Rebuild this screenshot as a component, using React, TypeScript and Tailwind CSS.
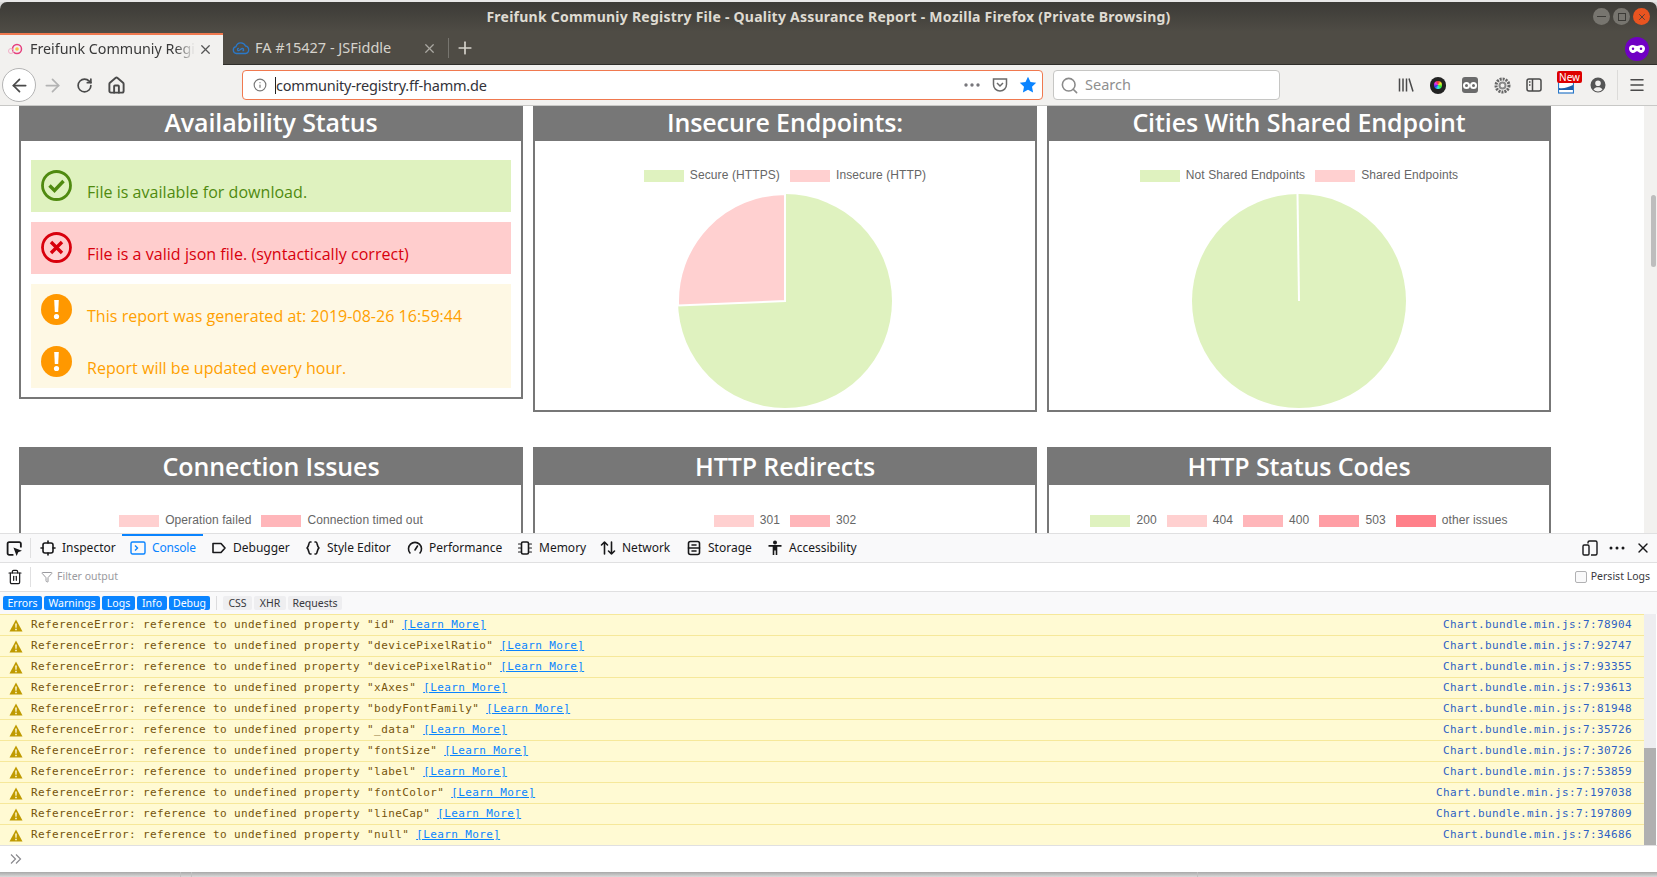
import type { ReactNode } from "react";
import { ArrowLeft, ArrowRight, RotateCw, Home, Info, Search, X, Plus, Menu, Trash2, Funnel } from "lucide-react";

const GREEN = "bg-[#dff2bf]";
const PINK = "bg-[#ffd0d0]";
const PINK2 = "bg-[#ffb6ba]";
const PINK3 = "bg-[#ff9ea5]";
const PINK4 = "bg-[#ff808a]";

const MESSAGES = [
  ["id", "78904"],
  ["devicePixelRatio", "92747"],
  ["devicePixelRatio", "93355"],
  ["xAxes", "93613"],
  ["bodyFontFamily", "81948"],
  ["_data", "35726"],
  ["fontSize", "30726"],
  ["label", "53859"],
  ["fontColor", "197038"],
  ["lineCap", "197809"],
  ["null", "34686"],
];

function DevIcon({ children }: { children: ReactNode }) {
  return (
    <svg width="16" height="16" viewBox="0 0 16 16" fill="none" stroke="#18181a" strokeWidth="1.6" strokeLinecap="round" strokeLinejoin="round" className="shrink-0">
      {children}
    </svg>
  );
}

const TABS: { name: string; w: string; icon: ReactNode; active?: boolean }[] = [
  {
    name: "Inspector",
    w: "w-[90px]",
    icon: (
      <DevIcon>
        <rect x="3" y="3" width="10" height="10" rx="2" />
        <path d="M8 1v2M8 13v2M1 8h2M13 8h2" />
      </DevIcon>
    ),
  },
  {
    name: "Console",
    w: "w-[81px]",
    active: true,
    icon: (
      <svg width="16" height="16" viewBox="0 0 16 16" fill="none" stroke="#0a84ff" strokeWidth="1.4" className="shrink-0">
        <rect x="1" y="2" width="14" height="12" rx="1.5" />
        <path d="M5 5.5 7.5 8 5 10.5" />
      </svg>
    ),
  },
  {
    name: "Debugger",
    w: "w-[94px]",
    icon: (
      <DevIcon>
        <path d="M2 3.5h8l4 4.5-4 4.5H2z" />
      </DevIcon>
    ),
  },
  {
    name: "Style Editor",
    w: "w-[102px]",
    icon: (
      <DevIcon>
        <path d="M6 2H5C3.5 2 4 7 2 8c2 1 1.500 6 3 6h1M10 2h1c1.500 0 1 5 3 6-2 1-1.500 6-3 6h-1" />
      </DevIcon>
    ),
  },
  {
    name: "Performance",
    w: "w-[110px]",
    icon: (
      <DevIcon>
        <path d="M3 13a6.500 6.500 0 1 1 10 0M8 10l2.500-4" />
      </DevIcon>
    ),
  },
  {
    name: "Memory",
    w: "w-[83px]",
    icon: (
      <DevIcon>
        <rect x="4.500" y="2" width="7" height="12" rx="1.500" />
        <path d="M1.500 4h2M1.500 8h2M1.500 12h2M12.500 4h2M12.500 8h2M12.500 12h2" strokeWidth="1.100" />
      </DevIcon>
    ),
  },
  {
    name: "Network",
    w: "w-[86px]",
    icon: (
      <DevIcon>
        <path d="M4.500 14V2M1.500 5l3-3 3 3M11.500 2v12M8.500 11l3 3 3-3" />
      </DevIcon>
    ),
  },
  {
    name: "Storage",
    w: "w-[81px]",
    icon: (
      <DevIcon>
        <rect x="2.500" y="1.500" width="11" height="13" rx="2" />
        <path d="M2.500 8h11M6 5h4M6 11h4" />
      </DevIcon>
    ),
  },
  {
    name: "Accessibility",
    w: "w-[106px]",
    icon: (
      <svg width="16" height="16" viewBox="0 0 16 16" fill="#18181a" className="shrink-0">
        <circle cx="8" cy="2.500" r="2" />
        <path d="M1.500 5h13v1.800H10.300V15H8.700v-4.500H7.300V15H5.700V6.800H1.500z" />
      </svg>
    ),
  },
];

const FILTERS_ON = [
  ["Errors", "w-[39px]"],
  ["Warnings", "w-[56px]"],
  ["Logs", "w-[33px]"],
  ["Info", "w-[30px]"],
  ["Debug", "w-[41px]"],
];

const FILTERS_OFF = [
  ["CSS", "w-[29px]"],
  ["XHR", "w-[32px]"],
  ["Requests", "w-[54px]"],
];

function WindowBtn({ bg, children }: { bg: string; children: ReactNode }) {
  return <div className={`w-[17px] h-[17px] rounded-full flex items-center justify-center ${bg}`}>{children}</div>;
}

function Slot({ children, w = "w-8" }: { children: ReactNode; w?: string }) {
  return <div className={`${w} h-full flex items-center justify-center shrink-0 relative`}>{children}</div>;
}

function StatusIcon({ kind }: { kind: "ok" | "bad" | "warn" }) {
  if (kind === "warn") {
    return (
      <svg width="31" height="31" viewBox="0 0 31 31" className="shrink-0">
        <circle cx="15.500" cy="15.500" r="15.500" fill="#ff9800" />
        <path d="M13.200 6h4.600l-.6 12h-3.400z" fill="#fff" />
        <circle cx="15.500" cy="22.500" r="2.600" fill="#fff" />
      </svg>
    );
  }
  const color = kind === "ok" ? "#4f8a10" : "#d8000c";
  return (
    <svg width="31" height="31" viewBox="0 0 31 31" fill="none" stroke={color} className="shrink-0">
      <circle cx="15.500" cy="15.500" r="14" strokeWidth="2.800" />
      {kind === "ok" ? (
        <path d="M8.500 15.500l5 5 9-9.500" strokeWidth="3.400" />
      ) : (
        <path d="M10 10l11 11M21 10 10 21" strokeWidth="3.400" />
      )}
    </svg>
  );
}

function Alert({ kind, text }: { kind: "ok" | "bad" | "warn"; text: string }) {
  const color = kind === "ok" ? "text-[#4f8a10]" : kind === "bad" ? "text-[#d8000c]" : "text-[#ffa000]";
  return (
    <div className="h-[52px] flex pl-[10px] pt-[10px] gap-[15px]">
      <StatusIcon kind={kind} />
      <div className={`pt-[10px] text-[16px] leading-[24px] tracking-[0.04px] ${color}`}>{text}</div>
    </div>
  );
}

function Card({ title, children }: { title: string; children: ReactNode }) {
  return (
    <div className="w-[504px] border-2 border-[#777777] bg-white self-start">
      <div className="h-[36px] bg-[#777777] text-white text-center text-[25px] leading-[34px] tracking-[-0.1px] font-semibold">
        {title}
      </div>
      {children}
    </div>
  );
}

function Legend({ items }: { items: [string, string][] }) {
  return (
    <div className="flex justify-center gap-[10px] h-[12px] font-['Liberation_Sans',sans-serif] text-[12px] leading-[12px] tracking-[0.1px] text-[#666666]">
      {items.map(([label, color]) => (
        <div key={label} className="flex gap-[6px]">
          <div className={`w-10 h-3 ${color}`} />
          <span className="-mt-px">{label}</span>
        </div>
      ))}
    </div>
  );
}

function Pie({ shared }: { shared?: boolean }) {
  return (
    <svg width="216" height="216" viewBox="0 0 216 216" className="block mx-auto mt-[11px]">
      <circle cx="108" cy="108" r="107" fill="#dff2bf" />
      {shared ? (
        <path d="M108 108 106.500 1" stroke="#fff" strokeWidth="2" fill="none" />
      ) : (
        <path d="M108 108V1A107 107 0 0 0 1.100 112.500Z" fill="#ffd0d0" stroke="#fff" strokeWidth="2" />
      )}
    </svg>
  );
}

export default function App() {
  return (
    <div className="w-[1657px] h-[877px] overflow-hidden bg-[#d9d9d9] font-['Noto_Sans',sans-serif]">
      <div className="h-[2px] bg-[#e8e8e8]" />
      <div className="h-[30px] rounded-t-[7px] bg-gradient-to-b from-[#3c3b37] to-[#4f4c45] flex items-center relative">
        <div className="w-full text-center text-[#dfdbd2] text-[14px] font-bold tracking-[0.24px] leading-[30px] -mt-[1px]">
          Freifunk Communiy Registry File - Quality Assurance Report - Mozilla Firefox (Private Browsing)
        </div>
        <div className="absolute right-[7px] top-[6px] flex gap-[3px]">
          <WindowBtn bg="bg-[#77756f]">
            <div className="w-[9px] h-[1.500px] bg-[#3c3b37]" />
          </WindowBtn>
          <WindowBtn bg="bg-[#77756f]">
            <div className="w-[8px] h-[8px] border border-[#3c3b37]" />
          </WindowBtn>
          <WindowBtn bg="bg-[#e95420]">
            <X size={10} color="#3c3b37" strokeWidth={2} />
          </WindowBtn>
        </div>
      </div>

      <div className="h-[33px] bg-[#4f4c45] flex relative border-b border-[#2f2e2a]">
        <div className="w-[223px] h-[33px] bg-[#f2f1ef] border-t-2 border-[#f0794f] mt-[1px] pb-[3px] flex items-center text-[14.300px] text-[#3a3a3a]">
          <svg width="16" height="16" viewBox="0 0 16 16" fill="none" className="ml-[7px] shrink-0">
            <circle cx="10" cy="8" r="4.500" stroke="#e6407e" strokeWidth="1.500" />
            <circle cx="10" cy="8" r="1.800" fill="#f5c542" />
            <circle cx="4" cy="10" r="2.500" stroke="#f3b0c8" strokeWidth="1" />
          </svg>
          <span className="ml-[7px] w-[165px] whitespace-nowrap [mask-image:linear-gradient(to_right,black_88%,transparent)]">
            Freifunk Communiy Regi
          </span>
          <X size={15} color="#555" className="ml-[3px]" />
        </div>
        <div className="w-[225px] flex items-center text-[14.500px] text-[#d6d3cc] relative">
          <svg width="18" height="14" viewBox="0 0 18 14" fill="none" stroke="#2a78c8" strokeWidth="1.300" className="ml-[9px] shrink-0">
            <path d="M4.500 12.500A3.500 3.500 0 0 1 4 5.600 5 5 0 0 1 13.500 5a3.800 3.800 0 0 1 0 7.500z" />
            <path d="M7 7.500c-2-1-2 3 0 2s2-2 3.500-2 1.500 3 0 2" />
          </svg>
          <span className="ml-[5px]">FA #15427 - JSFiddle</span>
          <X size={15} color="#aaa8a2" className="absolute left-[199px] top-[9px]" />
        </div>
        <div className="w-px h-[20px] mt-[6px] bg-[#77756f]" />
        <Plus size={20} color="#d6d3cc" className="ml-[6px] mt-[6px]" />
        <div className="absolute right-[8px] top-[5px] w-[24px] h-[24px] rounded-full bg-[#7000c4] flex items-center justify-center">
          <svg width="16" height="8" viewBox="0 0 16 8" fill="#fff">
            <path d="M4 0c1.500 0 2.500 1 4 1s2.500-1 4-1c2.500 0 4 1.500 4 3.500S14.500 8 12 8c-2 0-2.500-1.800-4-1.800S6 8 4 8C1.500 8 0 5.500 0 3.500S1.500 0 4 0zm0 2.500A1.200 1.200 0 1 0 4 5a1.200 1.200 0 0 0 0-2.500zm8 0A1.200 1.200 0 1 0 12 5a1.200 1.200 0 0 0 0-2.500z" fillRule="evenodd" />
          </svg>
        </div>
      </div>

      <div className="h-[41px] bg-[#f2f1ef] border-b border-[#c8c8c6] flex items-center">
        <div className="ml-[2px] w-[34px] h-[34px] rounded-full border border-[#b4b4b4] bg-white flex items-center justify-center shrink-0">
          <ArrowLeft size={21} color="#4a4a4a" strokeWidth={2} />
        </div>
        <Slot>
          <ArrowRight size={21} color="#b3b3b3" strokeWidth={2} />
        </Slot>
        <Slot>
          <RotateCw size={17} color="#4a4a4a" strokeWidth={2.400} />
        </Slot>
        <Slot>
          <Home size={19} color="#4a4a4a" strokeWidth={2.400} />
        </Slot>
        <div className="ml-[110px] w-[801px] h-[30px] bg-white border border-[#f0794f] rounded-[4px] flex items-center shrink-0">
          <Info size={14} color="#777" className="ml-[10px]" />
          <div className="ml-[8px] w-px h-[17px] bg-[#222]" />
          <div className="text-[14.500px] leading-[30px] text-[#33333a] tracking-[-0.22px]">community-registry.ff-hamm.de</div>
          <svg width="16" height="4" viewBox="0 0 16 4" fill="#77767b" className="ml-auto">
            <circle cx="2" cy="2" r="1.700" />
            <circle cx="8" cy="2" r="1.700" />
            <circle cx="14" cy="2" r="1.700" />
          </svg>
          <svg width="16" height="16" viewBox="0 0 16 16" fill="none" stroke="#6a6a6a" strokeWidth="1.500" className="ml-[12px]">
            <path d="M1.500 2h13v5.500a6.500 6.500 0 0 1-13 0z" />
            <path d="M5 6l3 3 3-3" />
          </svg>
          <svg width="18" height="18" viewBox="0 0 18 18" fill="#0a84ff" className="ml-[11px] mr-[5px]">
            <path d="M9 .8l2.500 5.300 5.700.7-4.200 4 1.100 5.800L9 13.800l-5.100 2.800L5 10.800l-4.200-4 5.700-.7z" />
          </svg>
        </div>
        <div className="ml-[10px] w-[227px] h-[30px] bg-white border border-[#c6c6c4] rounded-[4px] flex items-center shrink-0">
          <Search size={19} color="#8a8a8a" className="ml-[6px]" />
          <span className="ml-[6px] text-[14.500px] text-[#8f8f8f]">Search</span>
        </div>
        <div className="ml-[110px] flex h-full items-center">
          <Slot>
            <svg width="16" height="16" viewBox="0 0 16 16" fill="none" stroke="#4a4a4a" strokeWidth="1.500">
              <path d="M1.500 1.500v13M5 1.500v13M8.500 1.500v13M11 1.500l4 13" />
            </svg>
          </Slot>
          <Slot>
            <div className="w-[16px] h-[17px] rounded-full bg-[#222] flex items-center justify-center">
              <div className="w-[8px] h-[8px] rounded-full bg-[conic-gradient(#e33,#ee3,#3e3,#3ee,#33e,#e3e,#e33)]" />
            </div>
          </Slot>
          <Slot>
            <div className="w-[16px] h-[16px] rounded-[3px] bg-[#6b6b6b] flex items-center justify-center">
              <div className="w-[7px] h-[7px] rounded-full border-2 border-white" />
              <div className="w-[7px] h-[7px] rounded-full border-2 border-white" />
            </div>
          </Slot>
          <Slot>
            <svg width="17" height="17" viewBox="0 0 17 17" fill="none">
              <circle cx="8.500" cy="8.500" r="6.500" stroke="#666" strokeWidth="3" strokeDasharray="2 1" />
              <circle cx="8.500" cy="8.500" r="3" stroke="#8a8a8a" strokeWidth="2" />
            </svg>
          </Slot>
          <Slot>
            <svg width="16" height="16" viewBox="0 0 16 16" fill="none" stroke="#4a4a4a" strokeWidth="1.500">
              <rect x="1" y="2" width="14" height="12" rx="2" />
              <path d="M6.500 2v12M3 5h1.500M3 8h1.500" />
            </svg>
          </Slot>
          <Slot>
            <svg width="16" height="16" viewBox="0 0 16 16" fill="none" className="mt-[4px]">
              <rect x="0.500" y="2" width="15" height="12" fill="#fff" stroke="#2a78c8" strokeWidth="1.200" />
              <path d="M1 9c5 1 9-1 14-3v5H1z" fill="#1d5fa8" />
            </svg>
            <div className="absolute left-[7px] top-[6px] w-[25px] h-[12px] bg-[#dd0000] rounded-[2px] text-white text-[10px] leading-[12px] text-center">
              New
            </div>
          </Slot>
          <Slot>
            <svg width="16" height="16" viewBox="0 0 16 16" fill="#555555">
              <path d="M8 .5a7.500 7.500 0 1 0 0 15 7.500 7.500 0 0 0 0-15zm0 3a2.800 2.800 0 1 1 0 5.600 2.800 2.800 0 0 1 0-5.600zM3.500 12.500c1-1.700 2.500-2.300 4.500-2.300s3.500.6 4.500 2.300a6 6 0 0 1-9 0z" fillRule="evenodd" />
            </svg>
          </Slot>
          <div className="ml-[3px] w-px h-[30px] bg-[#dcdbd9]" />
          <Slot w="w-[38px]">
            <Menu size={18} color="#4a4a4a" strokeWidth={2} />
          </Slot>
        </div>
      </div>

      <div className="h-[427px] overflow-hidden bg-white flex font-['Open_Sans',sans-serif]">
        <div className="w-[1644px] -mt-[3px] pl-[19px] grid grid-cols-[504px_504px_504px] gap-x-[10px] gap-y-[35px] content-start shrink-0">
          <Card title="Availability Status">
            <div className="pt-[19px] pb-[9px] px-[10px] flex flex-col gap-[10px]">
              <div className={GREEN}>
                <Alert kind="ok" text="File is available for download." />
              </div>
              <div className="bg-[#ffcdcd]">
                <Alert kind="bad" text="File is a valid json file. (syntactically correct)" />
              </div>
              <div className="bg-[#fef8e4]">
                <Alert kind="warn" text="This report was generated at: 2019-08-26 16:59:44" />
                <Alert kind="warn" text="Report will be updated every hour." />
              </div>
            </div>
          </Card>
          <Card title="Insecure Endpoints:">
            <div className="pt-[29px] pb-[1px]">
              <Legend items={[["Secure (HTTPS)", GREEN], ["Insecure (HTTP)", PINK]]} />
              <Pie />
            </div>
          </Card>
          <Card title="Cities With Shared Endpoint">
            <div className="pt-[29px] pb-[1px]">
              <Legend items={[["Not Shared Endpoints", GREEN], ["Shared Endpoints", PINK]]} />
              <Pie shared />
            </div>
          </Card>
          <Card title="Connection Issues">
            <div className="pt-[30px] h-[60px]">
              <Legend items={[["Operation failed", PINK], ["Connection timed out", PINK2]]} />
            </div>
          </Card>
          <Card title="HTTP Redirects">
            <div className="pt-[30px] h-[60px]">
              <Legend items={[["301", PINK], ["302", PINK2]]} />
            </div>
          </Card>
          <Card title="HTTP Status Codes">
            <div className="pt-[30px] h-[60px]">
              <Legend items={[["200", GREEN], ["404", PINK], ["400", PINK2], ["503", PINK3], ["other issues", PINK4]]} />
            </div>
          </Card>
        </div>
        <div className="w-[13px] bg-[#f2f1ef] relative">
          <div className="absolute left-[7px] top-[89px] w-[5px] h-[72px] rounded-[3px] bg-[#bdbdbd]" />
        </div>
      </div>

      <div className="h-[339px] bg-white border-t border-[#e0e0e1] text-[#18181a]">
        <div className="h-[29px] bg-[#f9f9fa] border-b border-[#e0e0e1] flex text-[12px] leading-[28px]">
          <div className="w-[31px] border-r border-[#e0e0e1] my-[4px] flex items-center justify-center shrink-0">
            <svg width="17" height="17" viewBox="0 0 16 16" fill="none" stroke="#18181a" strokeWidth="1.700" className="mr-[1px]">
              <path d="M7 14H3a1.500 1.500 0 0 1-1.500-1.500v-9A1.500 1.500 0 0 1 3 2h9.500A1.500 1.500 0 0 1 14 3.500V7" />
              <path d="M7 7l8 3-3.500 1.500L10 15z" fill="#18181a" stroke="none" />
            </svg>
          </div>
          <div className="w-px" />
          {TABS.map((t) => (
            <div
              key={t.name}
              className={`${t.w} shrink-0 pl-[8px] flex items-center gap-[6px] whitespace-nowrap ${
                t.active ? "border-t-2 border-[#0a84ff] text-[#0a84ff] pb-[2px] tracking-[-0.2px]" : ""
              }`}
            >
              {t.icon}
              <span>{t.name}</span>
            </div>
          ))}
          <div className="ml-auto flex items-center">
            <svg width="16" height="16" viewBox="0 0 16 16" fill="none" stroke="#18181a" strokeWidth="1.400">
              <path d="M6 3.500V2.500A1.500 1.500 0 0 1 7.500 1h6A1.500 1.500 0 0 1 15 2.500v11a1.500 1.500 0 0 1-1.500 1.500H9" />
              <rect x="1" y="5" width="6" height="10" rx="1.200" />
            </svg>
            <svg width="16" height="4" viewBox="0 0 16 4" fill="#18181a" className="ml-[11px]">
              <circle cx="2" cy="2" r="1.500" />
              <circle cx="8" cy="2" r="1.500" />
              <circle cx="14" cy="2" r="1.500" />
            </svg>
            <X size={16} color="#18181a" className="ml-[10px] mr-[6px]" />
          </div>
        </div>

        <div className="h-[29px] bg-white border-b border-[#e0e0e1] flex items-center text-[11px]">
          <div className="w-[31px] h-[20px] border-r border-[#e0e0e1] flex items-center justify-center">
            <Trash2 size={16} color="#18181a" strokeWidth={1.800} />
          </div>
          <Funnel size={12} color="#9a9a9e" className="ml-[10px]" />
          <span className="ml-[4px] text-[#9a9a9e] text-[10.500px]">Filter output</span>
          <div className="ml-auto w-[12px] h-[12px] rounded-[2px] border border-[#b1b1b3] bg-[#f9f9fa]" />
          <span className="ml-[4px] mr-[7px] text-[10.500px] text-[#38383d]">Persist Logs</span>
        </div>

        <div className="h-[22px] bg-[#f9f9fa] flex items-center pl-[3px] text-[10.500px]">
          <div className="flex gap-[2px]">
            {FILTERS_ON.map(([label, w]) => (
              <div key={label} className={`${w} h-[14px] rounded-[2px] bg-[#0a84ff] text-white text-center leading-[14px]`}>
                {label}
              </div>
            ))}
          </div>
          <div className="ml-[6px] w-px h-[14px] bg-[#dcdcde]" />
          <div className="ml-[6px] flex gap-[2px]">
            {FILTERS_OFF.map(([label, w]) => (
              <div key={label} className={`${w} h-[14px] rounded-[2px] bg-[#eeeef0] text-[#38383d] text-center leading-[14px]`}>
                {label}
              </div>
            ))}
          </div>
        </div>

        <div className="flex">
          <div className="w-[1644px] font-['DejaVu_Sans_Mono',monospace] text-[11px] tracking-[0.38px]">
            {MESSAGES.map(([prop, pos]) => (
              <div key={prop + pos} className="h-[21px] bg-[#fffad3] border-t border-[#f6e89a] flex items-center">
                <svg width="14" height="13" viewBox="0 0 14 13" className="ml-[9px] shrink-0">
                  <path d="M7 .5 13.500 12.500H.5z" fill="#bf9a00" />
                  <path d="M6.200 4.500h1.600l-.2 4.300H6.400zM6.200 9.700h1.600v1.500H6.200z" fill="#fffad3" />
                </svg>
                <span className="ml-[8px] text-[#76540b] whitespace-pre">
                  {`ReferenceError: reference to undefined property "${prop}" `}
                </span>
                <span className="text-[#0a84ff] underline">[Learn More]</span>
                <span className="ml-auto mr-[12px] text-[#2e62c4]">{`Chart.bundle.min.js:7:${pos}`}</span>
              </div>
            ))}
          </div>
          <div className="w-[12px] h-[231px] bg-[#ededf0] flex flex-col justify-end shrink-0">
            <div className="h-[97px] bg-[#b0b0b0]" />
          </div>
        </div>

        <div className="h-[27px] bg-white border-t border-[#e0e0e1] flex items-center pl-[10px]">
          <svg width="12" height="12" viewBox="0 0 12 12" fill="none" stroke="#8a8a8e" strokeWidth="1.200">
            <path d="M1 1.500 5.500 6 1 10.500M6 1.500 10.500 6 6 10.500" />
          </svg>
        </div>
      </div>

      <div className="h-[5px] flex bg-gradient-to-b from-[#a8a8a8] to-[#dadada]">
        <div className="ml-[180px] w-[12px] border-x border-[#c0c0c0]" />
        <div className="ml-[1005px] w-px bg-[#c0c0c0]" />
      </div>
    </div>
  );
}
